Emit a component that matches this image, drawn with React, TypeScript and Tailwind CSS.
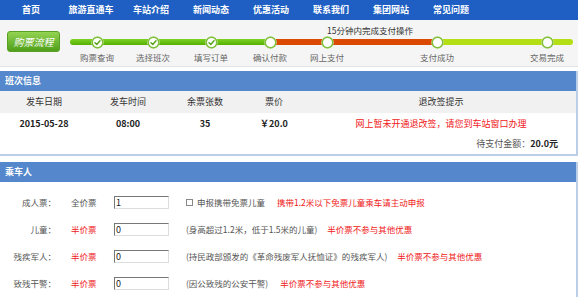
import React from 'react';

const navItems = ['首页', '旅游直通车', '车站介绍', '新闻动态', '优惠活动', '联系我们', '集团网站', '常见问题'];

const steps = [
  { x: 97, label: '购票查询', done: true },
  { x: 153, label: '选择班次', done: true },
  { x: 211, label: '填写订单', done: true },
  { x: 270, label: '确认付款', done: false },
  { x: 327, label: '网上支付', done: false },
  { x: 437, label: '支付成功', done: false },
  { x: 547, label: '交易完成', done: false },
];

function Circle({ done }: { done: boolean }) {
  return (
    <svg width="13" height="13" viewBox="0 0 13 13">
      <circle cx="6.5" cy="6.5" r="6.2" fill="#cfe8b0" />
      <circle cx="6.5" cy="6.5" r="5.2" fill="#ffffff" stroke="#7fbf3a" strokeWidth="1.4" />
      {done && <path d="M4 6.7 L5.8 8.4 L9 4.8" fill="none" stroke="#5aa51c" strokeWidth="1.5" strokeLinecap="round" strokeLinejoin="round" />}
    </svg>
  );
}

function Row({
  label,
  type,
  red,
  value,
  children,
}: {
  label: string;
  type: string;
  red?: boolean;
  value: string;
  children: React.ReactNode;
}) {
  return (
    <div className="flex h-[27px] items-center text-[8.5px] text-[#555]">
      <div className="w-[56px] text-right">{label}</div>
      <div className={`ml-[15px] w-[43px] ${red ? 'text-[#f02020]' : 'text-[#555]'}`}>{type}</div>
      <div className="flex h-[13px] w-[55px] items-center border border-t-[#777] border-l-[#777] border-r-[#ddd] border-b-[#ddd] bg-white pl-[1px] text-[9px] leading-none text-[#222]">
        {value}
      </div>
      <div className="ml-[17px] flex items-center">{children}</div>
    </div>
  );
}

export default function App() {
  return (
    <div className="h-[307px] w-[582px] overflow-hidden bg-white font-['Noto_Sans_CJK_SC','Noto_Sans',sans-serif]">
      <div className="w-[578px]">
        {/* nav */}
        <div className="flex h-[20px] bg-[#1f5fc3] pl-[1px]">
          {navItems.map((n) => (
            <div key={n} className="w-[60px] text-center text-[9px] font-bold leading-[20px] text-white">
              {n}
            </div>
          ))}
        </div>

        {/* progress */}
        <div className="relative h-[47px] border-b border-[#e4e4e4] bg-[#f5f5f5]">
          <div className="absolute left-[7px] top-[11px] flex h-[21px] w-[53px] items-center justify-center rounded-[3px] border border-[#5b9f24] bg-gradient-to-b from-[#93d451] to-[#4f9f17] text-[10px] italic text-white">
            购票流程
          </div>
          <div className="absolute left-[70px] top-[19px] flex h-[6px] w-[503px] overflow-hidden rounded-full">
            <div className="h-full w-[200px] bg-gradient-to-b from-[#7ed321] to-[#55b000]" />
            <div className="h-full w-[167px] bg-[#db4a02]" />
            <div className="h-full flex-1 bg-[#b4df14]" />
          </div>
          <div className="absolute left-[327px] top-[4px] text-[8.5px] leading-[12px] text-[#333]">15分钟内完成支付操作</div>
          {steps.map((s) => (
            <React.Fragment key={s.label}>
              <div className="absolute top-[16px]" style={{ left: s.x - 6.5 }}>
                <Circle done={s.done} />
              </div>
              <div
                className="absolute top-[31px] w-[60px] text-center text-[8.5px] leading-[12px] text-[#666]"
                style={{ left: s.x - 30 }}
              >
                {s.label}
              </div>
            </React.Fragment>
          ))}
        </div>

        {/* panel 1 */}
        <div className="mt-[4px] border-b-2 border-r-2 border-[#bccde8]">
          <div className="h-[20px] bg-[#5487cb] pl-[5px] text-[9px] font-bold leading-[20px] text-white">班次信息</div>
          <div className="grid h-[22px] grid-cols-[88px_80px_74px_64px_1fr] items-center bg-[#f1f1f1] text-center text-[9px] text-[#333]">
            <div>发车日期</div>
            <div>发车时间</div>
            <div>余票张数</div>
            <div>票价</div>
            <div>退改签提示</div>
          </div>
          <div className="grid h-[21px] grid-cols-[88px_80px_74px_64px_1fr] items-center text-center text-[9px] text-[#222]">
            <div className="font-bold">2015-05-28</div>
            <div className="font-bold">08:00</div>
            <div className="font-bold">35</div>
            <div className="font-bold">￥20.0</div>
            <div className="text-[#f02020]">网上暂未开通退改签，请您到车站窗口办理</div>
          </div>
          <div className="flex h-[20px] items-center justify-end pr-[18px] text-[9px] text-[#555]">
            待支付金额：<span className="font-bold text-[#222]">20.0元</span>
          </div>
        </div>

        {/* panel 2 */}
        <div className="mt-[6px] border-r-2 border-[#bccde8]">
          <div className="h-[20px] bg-[#5487cb] pl-[5px] text-[9px] font-bold leading-[20px] text-white">乘车人</div>
          <div className="pt-[7px]">
            <Row label="成人票：" type="全价票" value="1">
              <span className="mr-[4px] inline-block h-[7px] w-[7px] border border-[#888] bg-white" />
              <span>申报携带免票儿童</span>
              <span className="ml-[12px] text-[#f02020]">携带1.2米以下免票儿童乘车请主动申报</span>
            </Row>
            <Row label="儿童：" type="半价票" red value="0">
              <span>(身高超过1.2米，低于1.5米的儿童)</span>
              <span className="ml-[10px] text-[#f02020]">半价票不参与其他优惠</span>
            </Row>
            <Row label="残疾军人：" type="半价票" red value="0">
              <span>(持民政部颁发的《革命残废军人抚恤证》的残疾军人)</span>
              <span className="ml-[10px] text-[#f02020]">半价票不参与其他优惠</span>
            </Row>
            <Row label="致残干警：" type="半价票" red value="0">
              <span>(因公致残的公安干警)</span>
              <span className="ml-[12px] text-[#f02020]">半价票不参与其他优惠</span>
            </Row>
          </div>
        </div>
      </div>
    </div>
  );
}
